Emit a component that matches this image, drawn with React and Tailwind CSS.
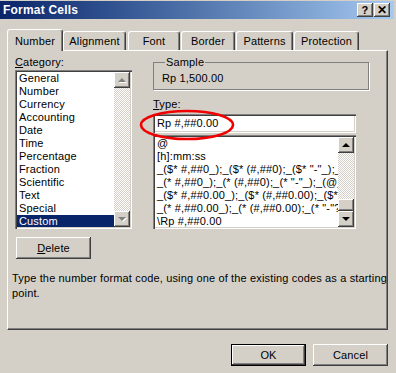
import React from 'react';

const raised =
  'bg-[#d4d0c8] shadow-[inset_-1px_-1px_#404040,inset_1px_1px_#ffffff,inset_-2px_-2px_#808080,inset_2px_2px_#d4d0c8]';
const sunken =
  'bg-white shadow-[inset_1px_1px_#808080,inset_2px_2px_#404040,inset_-1px_-1px_#ffffff,inset_-2px_-2px_#d4d0c8]';

const categories = [
  'General', 'Number', 'Currency', 'Accounting', 'Date', 'Time',
  'Percentage', 'Fraction', 'Scientific', 'Text', 'Special', 'Custom',
];

const formats = [
  '@',
  '[h]:mm:ss',
  '_($* #,##0_);_($* (#,##0);_($* "-"_);_(@_)',
  '_(* #,##0_);_(* (#,##0);_(* "-"_);_(@_)',
  '_($* #,##0.00_);_($* (#,##0.00);_($* "-"??_);_(@_)',
  '_(* #,##0.00_);_(* (#,##0.00);_(* "-"??_);_(@_)',
  '\\Rp #,##0.00',
];

const tabs = [
  { label: 'Number', w: 'w-[56px] ml-[7px]', active: true },
  { label: 'Alignment', w: 'w-[63px]' },
  { label: 'Font', w: 'w-[52px] ml-[2px]' },
  { label: 'Border', w: 'w-[54px] ml-[1px]' },
  { label: 'Patterns', w: 'w-[57px] ml-[1px]' },
  { label: 'Protection', w: 'w-[65px] ml-[1px]' },
];

// little scroll arrow drawn from css borders
const Arrow = ({ up, disabled }) => (
  <div
    className={`w-0 h-0 border-l-[4px] border-r-[4px] border-transparent ${
      up ? 'border-b-[4px]' : 'border-t-[4px]'
    } ${
      disabled
        ? up
          ? 'border-b-[#808080] drop-shadow-[1px_1px_0_#ffffff]'
          : 'border-t-[#808080] drop-shadow-[1px_1px_0_#ffffff]'
        : up
        ? 'border-b-black'
        : 'border-t-black'
    }`}
  />
);

const ScrollBar = ({ disabled, thumb }) => (
  <div className="w-[16px] flex flex-col shrink-0">
    <div className={`${raised} h-[16px] flex items-center justify-center`}>
      <Arrow up disabled={disabled} />
    </div>
    <div className="flex-1 bg-[repeating-conic-gradient(#d4d0c8_0_25%,#ffffff_0_50%)] bg-[length:2px_2px]" />
    {thumb && <div className={`${raised} h-[12px]`} />}
    <div className={`${raised} h-[16px] flex items-center justify-center`}>
      <Arrow disabled={disabled} />
    </div>
  </div>
);

const Button = ({ children, className = '', isDefault }) => (
  <div
    className={`${className} ${
      isDefault ? 'border border-black' : ''
    } ${raised} flex items-center justify-center`}
  >
    {children}
  </div>
);

export default function App() {
  return (
    <div className="relative w-[396px] h-[373px] bg-[#d4d0c8] pt-px text-[11px] leading-[13px] tracking-[0.15px] text-black font-['Liberation_Sans',Tahoma,sans-serif] overflow-hidden">
      {/* title bar */}
      <div className="h-[18px] w-[394px] bg-gradient-to-r from-[#0a246a] to-[#a6caf0] flex items-center justify-between pl-[3px] pr-[4px]">
        <span className="text-white font-bold text-[12px] tracking-[0.2px]">Format Cells</span>
        <div className="flex gap-[1px]">
          <Button className="w-[16px] h-[14px] font-bold text-[11px]">?</Button>
          <Button className="w-[16px] h-[14px] font-bold text-[12px]">✕</Button>
        </div>
      </div>

      {/* tabs */}
      <div className="flex items-end h-[21px] mt-[10px]">
        {tabs.map(t => (
          <div
            key={t.label}
            className={`${t.w} ${
              t.active
                ? 'relative z-10 h-[22px] -mb-px pt-[5px] bg-[#d4d0c8]'
                : 'h-[19px] pt-[3px]'
            } border-l border-t border-white border-r border-r-[#404040] rounded-t-[3px] shadow-[inset_-1px_0_#808080] text-center`}
          >
            {t.label}
          </div>
        ))}
      </div>

      {/* tab panel */}
      <div className="ml-[7px] w-[381px] h-[280px] border-l border-t border-white border-r border-b border-r-[#404040] border-b-[#404040] shadow-[inset_-1px_-1px_#808080]">
        <div className="flex pl-[7px]">
          {/* category column */}
          <div className="w-[117px] pt-[5px]">
            <div className="h-[13px]">
              <u>C</u>ategory:
            </div>
            <div className={`${sunken} mt-px h-[159px] p-[2px] flex`}>
              <div className="flex-1 overflow-hidden">
                {categories.map(c => (
                  <div
                    key={c}
                    className={`h-[13px] pl-[2px] ${
                      c === 'Custom' ? 'bg-[#0a246a] text-white' : ''
                    }`}
                  >
                    {c}
                  </div>
                ))}
              </div>
              <ScrollBar disabled />
            </div>
            <Button className="mt-[8px] ml-px w-[75px] h-[22px]">
              <span>
                <u>D</u>elete
              </span>
            </Button>
          </div>

          {/* type column */}
          <div className="ml-[21px] w-[216px]">
            <fieldset className="border border-[#808080] shadow-[1px_1px_0_#ffffff] h-[34px] pl-[8px] mt-[5px]">
              <legend className="ml-[3px] px-[1px] leading-[13px]">Sample</legend>
              <div className="pt-[3px]">Rp 1,500.00</div>
            </fieldset>
            <div className="mt-[8px] h-[13px]">
              <u>T</u>ype:
            </div>
            <div className={`${sunken} mt-[3px] w-[203px] h-[19px] pl-[4px] flex items-center`}>
              Rp #,##0.00
            </div>
            <div className={`${sunken} mt-[2px] w-[203px] h-[94px] p-[2px] flex`}>
              <div className="flex-1 overflow-hidden">
                {formats.map(f => (
                  <div key={f} className="h-[13px] pl-[2px] whitespace-nowrap">
                    {f}
                  </div>
                ))}
              </div>
              <ScrollBar thumb />
            </div>
          </div>
        </div>

        <p className="mt-[12px] pl-[4px] leading-[15px]">
          Type the number format code, using one of the existing codes as a starting
          <br />
          point.
        </p>
      </div>

      {/* dialog buttons */}
      <div className="flex justify-end gap-[7px] mt-[14px] pr-[8px]">
        <Button isDefault className="w-[75px] h-[22px]">OK</Button>
        <Button className="w-[75px] h-[22px]">Cancel</Button>
      </div>

      {/* red annotation ring over the Type box */}
      <svg
        className="absolute left-[139px] top-[108px]"
        width="96"
        height="34"
        viewBox="0 0 96 34"
      >
        <ellipse cx="48" cy="17" rx="46" ry="14" fill="none" stroke="#f00000" strokeWidth="2.6" />
      </svg>
    </div>
  );
}
